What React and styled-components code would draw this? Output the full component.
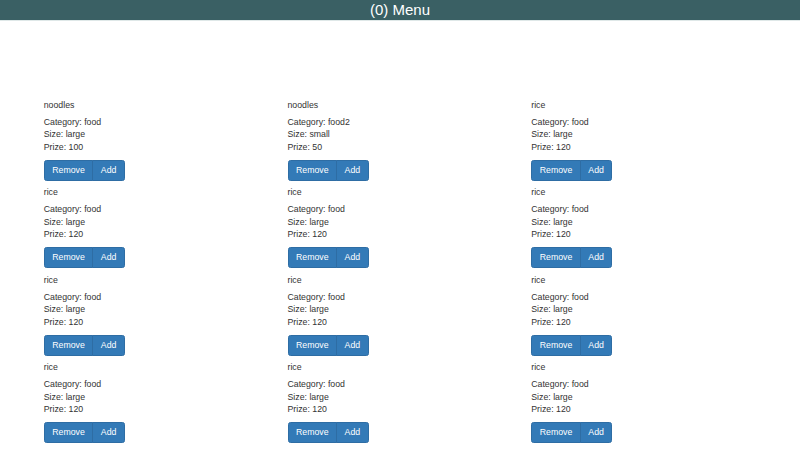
import React from 'react';
import styled, { createGlobalStyle } from 'styled-components';

const GlobalStyle = createGlobalStyle`
	html, body {
		margin: 0;
		padding: 0;
		overflow: hidden;
		background: #ffffff;
	}
	body {
		font-family: "Liberation Sans", Arial, Helvetica, sans-serif;
		font-size: 8.75px;
		line-height: 12.5px;
		color: #333333;
	}
`;

const items = [
	{ name: 'noodles', category: 'food', size: 'large', prize: 100 },
	{ name: 'noodles', category: 'food2', size: 'small', prize: 50 },
	{ name: 'rice', category: 'food', size: 'large', prize: 120 },
	...Array.from({ length: 12 }, () => ({
		name: 'rice',
		category: 'food',
		size: 'large',
		prize: 120
	}))
];

const Item = ({ item }) => (
	<Card>
		<Name>{item.name}</Name>
		<Details>
			Category: {item.category}
			<br />
			Size: {item.size}
			<br />
			Prize: {item.prize}
		</Details>
		<BtnGroup>
			<Button first>Remove</Button>
			<Button>Add</Button>
		</BtnGroup>
	</Card>
);

export const App = () => {
	return (
		<>
			<GlobalStyle />
			<Header>(0) Menu</Header>
			<Container>
				<Grid>
					{items.map((item, index) => (
						<Item key={index} item={item} />
					))}
				</Grid>
			</Container>
		</>
	);
};

export default App;

const Header = styled.header`
	height: 20px;
	background-color: #3a6064;
	color: #ffffff;
	font-size: 15px;
	line-height: 20px;
	text-align: center;
	border-bottom: 1px solid #dfe8e8;
`;

const Container = styled.div`
	width: 731.25px;
	margin: 0 auto;
	padding: 77.5px 9.375px 0;
	box-sizing: border-box;
`;

const Grid = styled.div`
	display: grid;
	grid-template-columns: repeat(3, 1fr);
	margin: 0 -9.375px;
`;

const Card = styled.div`
	padding: 0 9.375px 5.25px;
`;

const Name = styled.p`
	margin: 0 0 4.75px;
`;

const Details = styled.p`
	margin: 0 0 6.25px;
`;

const BtnGroup = styled.div`
	display: flex;
`;

const Button = styled.button`
	font-family: "Liberation Sans", Arial, Helvetica, sans-serif;
	font-size: 8.75px;
	line-height: 12.5px;
	color: #ffffff;
	background-color: #337ab7;
	border: 1px solid #2e6da4;
	padding: 3.375px 7.5px;
	margin: 0;
	margin-left: ${props => (props.first ? '0' : '-1px')};
	border-radius: ${props => (props.first ? '2.5px 0 0 2.5px' : '0 2.5px 2.5px 0')};
	cursor: pointer;
`;
